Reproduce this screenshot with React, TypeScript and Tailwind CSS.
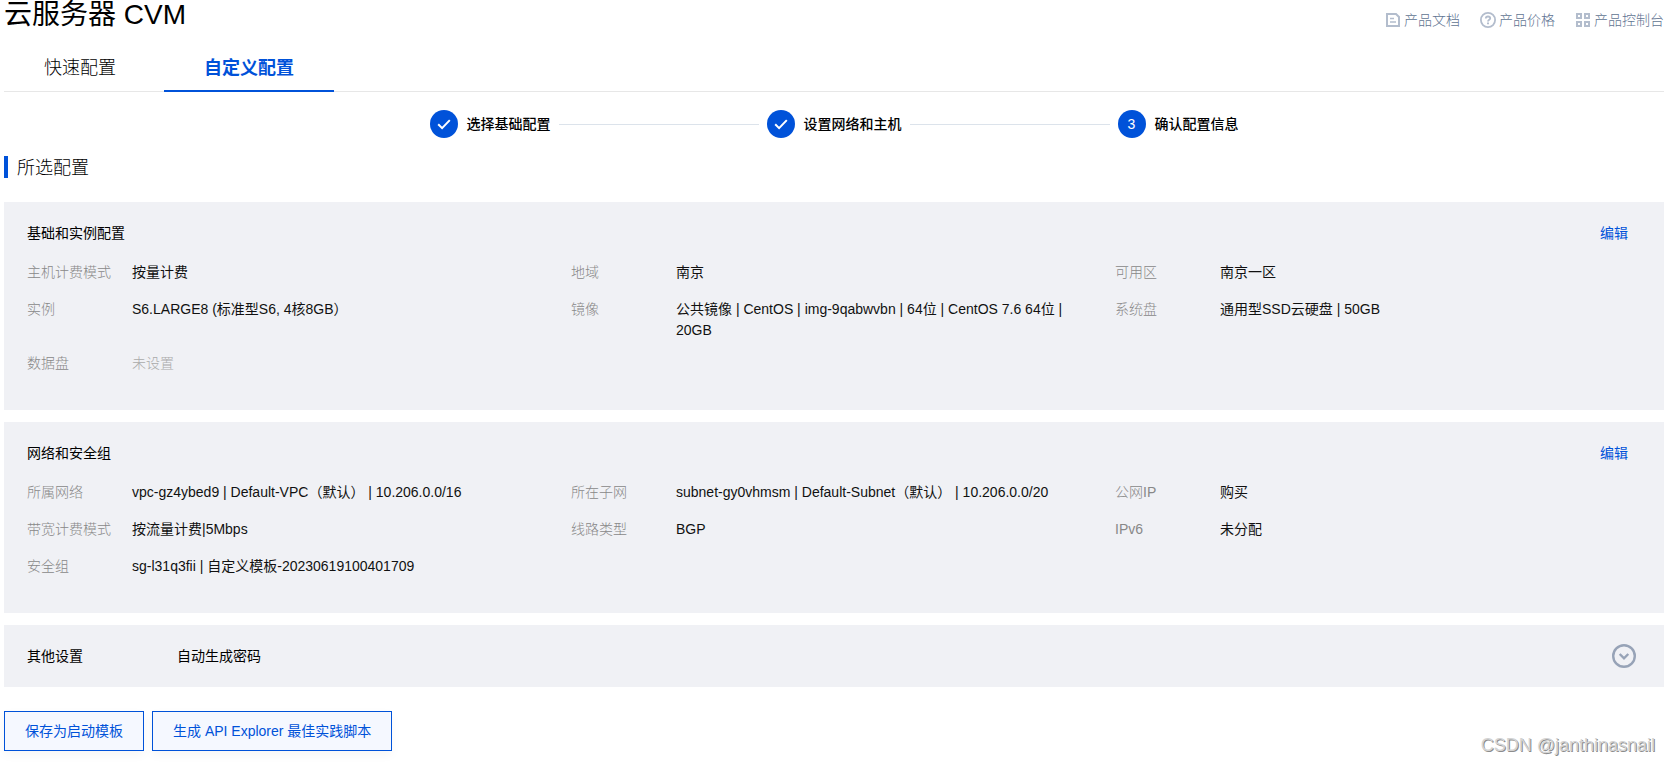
import type { ReactNode } from 'react'

type Field = {
  label: string
  value: string
  muted?: boolean
}

const baseFields: Field[] = [
  { label: '主机计费模式', value: '按量计费' },
  { label: '地域', value: '南京' },
  { label: '可用区', value: '南京一区' },
  { label: '实例', value: 'S6.LARGE8 (标准型S6, 4核8GB）' },
  { label: '镜像', value: '公共镜像 | CentOS | img-9qabwvbn | 64位 | CentOS 7.6 64位 | 20GB' },
  { label: '系统盘', value: '通用型SSD云硬盘 | 50GB' },
  { label: '数据盘', value: '未设置', muted: true },
]

const networkFields: Field[] = [
  { label: '所属网络', value: 'vpc-gz4ybed9 | Default-VPC（默认） | 10.206.0.0/16' },
  { label: '所在子网', value: 'subnet-gy0vhmsm | Default-Subnet（默认） | 10.206.0.0/20' },
  { label: '公网IP', value: '购买' },
  { label: '带宽计费模式', value: '按流量计费|5Mbps' },
  { label: '线路类型', value: 'BGP' },
  { label: 'IPv6', value: '未分配' },
  { label: '安全组', value: 'sg-l31q3fii | 自定义模板-20230619100401709' },
]

function DocIcon() {
  return (
    <svg width="16" height="16" viewBox="0 0 16 16" fill="none" stroke="#b3bdcd" strokeWidth="2">
      <path d="M2 2h9l3 3v9H2z" />
      <path d="M5 6.5h4M5 10h6" strokeWidth="1.6" />
    </svg>
  )
}

function HelpIcon() {
  return (
    <svg width="16" height="16" viewBox="0 0 16 16" fill="none" stroke="#b3bdcd">
      <circle cx="8" cy="8" r="7.1" strokeWidth="1.8" />
      <path d="M5.8 6.6C5.8 5.2 6.8 4.5 8 4.5s2.2.7 2.2 1.9c0 1.4-2.2 1.5-2.2 3.1" strokeWidth="1.8" />
      <path d="M8 10.5v1.8" strokeWidth="2" />
    </svg>
  )
}

function GridIcon() {
  return (
    <svg width="16" height="16" viewBox="0 0 16 16" fill="none" stroke="#b3bdcd" strokeWidth="2">
      <path d="M2 2h4v4H2zM10 2h4v4h-4zM2 10h4v4H2zM10 10h4v4h-4z" />
    </svg>
  )
}

function HeaderLink({ icon, children }: { icon: ReactNode; children: ReactNode }) {
  return (
    <a href="#" className="flex items-center gap-[3px] leading-[22px] font-light text-[#5f7492]">
      {icon}
      {children}
    </a>
  )
}

function Step({ index, done, children }: { index: number; done?: boolean; children: ReactNode }) {
  return (
    <li className="flex items-center gap-[9px]">
      <span className="flex size-7 items-center justify-center rounded-full bg-[#0052d9] text-white">
        {done ? (
          <svg width="16" height="16" viewBox="0 0 16 16" fill="none" stroke="white" strokeWidth="2">
            <path d="M2.2 8.2l3.9 3.9 7.7-8" />
          </svg>
        ) : (
          index
        )}
      </span>
      <span className="font-medium">{children}</span>
    </li>
  )
}

function StepLine() {
  return <li aria-hidden="true" className="h-px w-[200px] bg-[#dce3eb]" />
}

function ConfigCard({ title, fields }: { title: string; fields: Field[] }) {
  return (
    <section className="bg-[#f0f1f5] px-[23px] pt-[21px] pb-8">
      <div className="mb-[18px] flex justify-between">
        <h3>{title}</h3>
        <a href="#" className="mr-[13px] text-[#0052d9]">编辑</a>
      </div>
      <dl className="grid grid-cols-3 gap-x-[18px] gap-y-3">
        {fields.map((field) => (
          <div key={field.label} className="flex min-h-[25px]">
            <dt className="w-[105px] shrink-0 font-light text-[#888888]">{field.label}</dt>
            <dd className={field.muted ? 'font-light text-[#aaaaaa]' : 'text-[#111111]'}>{field.value}</dd>
          </div>
        ))}
      </dl>
    </section>
  )
}

export default function App() {
  return (
    <div className="relative bg-white pr-1.5 pb-[13px] pl-1 font-['Liberation_Sans','Noto_Sans_CJK_SC',sans-serif] text-sm leading-[21px] text-black">
      <header className="flex h-8 items-start justify-between">
        <h1 className="text-[28px] leading-[30px]">云服务器 CVM</h1>
        <nav className="mt-[9px] flex gap-5">
          <HeaderLink icon={<DocIcon />}>产品文档</HeaderLink>
          <HeaderLink icon={<HelpIcon />}>产品价格</HeaderLink>
          <HeaderLink icon={<GridIcon />}>产品控制台</HeaderLink>
        </nav>
      </header>

      <div role="tablist" className="mt-[13px] flex h-[47px] gap-2 border-b border-[#e7e7e7] text-lg leading-[47px]">
        <button role="tab" aria-selected="false" className="h-[47px] px-10 font-light">
          快速配置
        </button>
        <button role="tab" aria-selected="true" className="h-[47px] border-b-2 border-[#0052d9] px-10 font-bold text-[#0052d9]">
          自定义配置
        </button>
      </div>

      <ol className="mt-[18px] flex items-center justify-center gap-2">
        <Step index={1} done>选择基础配置</Step>
        <StepLine />
        <Step index={2} done>设置网络和主机</Step>
        <StepLine />
        <Step index={3}>确认配置信息</Step>
      </ol>

      <h2 className="mt-[18px] mb-6 border-l-4 border-[#0052d9] pt-0.5 pl-[9px] text-lg leading-5 font-light">所选配置</h2>

      <main className="flex flex-col gap-3">
        <ConfigCard title="基础和实例配置" fields={baseFields} />
        <ConfigCard title="网络和安全组" fields={networkFields} />

        <section className="flex h-[62px] items-center bg-[#f0f1f5] px-[23px]">
          <h3 className="w-[150px]">其他设置</h3>
          <p>自动生成密码</p>
          <button aria-label="展开" className="mr-[5px] ml-auto">
            <svg width="24" height="24" viewBox="0 0 24 24" fill="none" stroke="#97a3b7">
              <circle cx="12" cy="12" r="10.8" strokeWidth="2.4" />
              <path d="M7.7 10l4.3 4.3 4.3-4.3" strokeWidth="2.4" />
            </svg>
          </button>
        </section>
      </main>

      <div className="mt-6 flex gap-2">
        <button className="h-10 border border-[#0052d9] bg-[#f5f8ff] px-5 text-[#0052d9] shadow-[0_4px_10px_rgba(0,0,0,0.04)]">
          保存为启动模板
        </button>
        <button className="h-10 border border-[#0052d9] bg-[#f5f8ff] px-5 text-[#0052d9] shadow-[0_4px_10px_rgba(0,0,0,0.04)]">
          生成 API Explorer 最佳实践脚本
        </button>
      </div>

      <div className="absolute right-[15px] bottom-2 text-lg leading-[22px] text-[#d4d4d4] [text-shadow:1px_1px_0_#8c8c8c]">
        CSDN @janthinasnail
      </div>
    </div>
  )
}
